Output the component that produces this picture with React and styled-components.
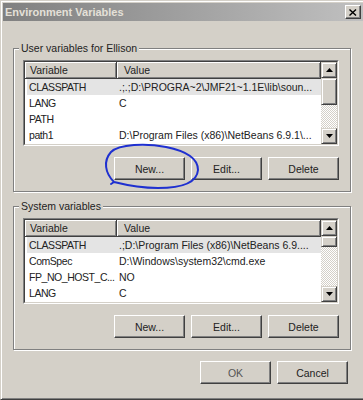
import React from 'react';
import styled, { createGlobalStyle } from 'styled-components';

const GlobalStyle = createGlobalStyle`
  html, body {
    margin: 0;
    padding: 0;
    width: 363px;
    height: 400px;
    overflow: hidden;
    background: #d4d0c8;
  }
  * { box-sizing: border-box; }
`;

const FONT = `"Liberation Sans", Arial, sans-serif`;

const Window = styled.div`
  position: relative;
  width: 366px;
  height: 400px;
  background: #d4d0c8;
  border: 1px solid;
  border-color: #d4d0c8 #404040 #404040 #d4d0c8;
  box-shadow: inset 1px 1px #fff, inset -1px -1px #808080;
  padding: 2px;
  font-family: ${FONT};
  font-size: 10.5px;
  color: #222;
`;

const TitleBar = styled.div`
  height: 18px;
  display: flex;
  align-items: center;
  justify-content: space-between;
  padding: 0 2px 0 2px;
  background: linear-gradient(to right, #808080, #c0c0c0);
`;

const Title = styled.span`
  font-weight: bold;
  font-size: 11px;
  color: #e4e0d8;
`;

const CloseButton = styled.div`
  width: 16px;
  height: 14px;
  display: flex;
  align-items: center;
  justify-content: center;
  background: #d4d0c8;
  border: 1px solid;
  border-color: #fff #404040 #404040 #fff;
  box-shadow: inset -1px -1px #808080;
`;

const Body = styled.div`
  display: flex;
  flex-direction: column;
  padding: 21px 0 0 10px;
`;

const Group = styled.fieldset`
  width: 338px;
  margin: ${p => (p.$first ? '0' : '8px 0 0 0')};
  padding: 5px 11px 11px 9px;
  border: 1px solid #808080;
  box-shadow: inset 1px 1px #fff, 1px 1px #fff;
  min-width: 0;
`;

const Legend = styled.legend`
  margin-left: -4px;
  padding: 0 2px;
  line-height: 13px;
  background: #d4d0c8;
`;

const ListBox = styled.div`
  height: 86px;
  border: 1px solid;
  border-color: #808080 #fff #fff #808080;
`;

const ListInner = styled.div`
  height: 100%;
  border: 1px solid;
  border-color: #404040 #d4d0c8 #d4d0c8 #404040;
  background: #fff;
  display: grid;
  grid-template-columns: 1fr 16px;
  overflow: hidden;
`;

const ListMain = styled.div`
  display: flex;
  flex-direction: column;
  overflow: hidden;
`;

const Header = styled.div`
  display: grid;
  grid-template-columns: 92px 1fr;
  height: 17px;
  flex-shrink: 0;
`;

const HeaderCell = styled.div`
  display: flex;
  align-items: center;
  padding-left: ${p => p.$pad}px;
  background: #d4d0c8;
  border-right: 1px solid #404040;
  border-bottom: 1px solid #404040;
  box-shadow: inset 1px 1px #fff, inset -1px -1px #808080;
`;

const Row = styled.div`
  display: grid;
  grid-template-columns: 90px 1fr;
  height: 16px;
  flex-shrink: 0;
  align-items: center;
  margin-left: 2px;
  background: ${p => (p.$selected ? '#e4e4e4' : 'transparent')};
  white-space: nowrap;
`;

const Cell = styled.span`
  padding-left: 2px;
  overflow: hidden;
  letter-spacing: ${p => (p.$name ? '-0.45px' : '0')};
`;

const ScrollBar = styled.div`
  display: flex;
  flex-direction: column;
  background: repeating-conic-gradient(#d4d0c8 0 25%, #fff 0 50%) 0 0 / 2px 2px;
`;

const ScrollButton = styled.div`
  height: 16px;
  flex-shrink: 0;
  display: flex;
  align-items: center;
  justify-content: center;
  background: #d4d0c8;
  border: 1px solid;
  border-color: #d4d0c8 #404040 #404040 #d4d0c8;
  box-shadow: inset 1px 1px #fff, inset -1px -1px #808080;
`;

const Thumb = styled.div`
  height: ${p => p.$size}px;
  flex-shrink: 0;
  background: #d4d0c8;
  border: 1px solid;
  border-color: #d4d0c8 #404040 #404040 #d4d0c8;
  box-shadow: inset 1px 1px #fff, inset -1px -1px #808080;
`;

const Spacer = styled.div`
  flex: 1;
`;

const ButtonRow = styled.div`
  display: flex;
  justify-content: flex-end;
  gap: 6px;
  margin-top: ${p => p.$top}px;
  padding-right: ${p => p.$right || 0}px;
`;

const Button = styled.div`
  width: 71px;
  height: 23px;
  display: flex;
  align-items: center;
  justify-content: center;
  background: #d4d0c8;
  border: 1px solid;
  border-color: #fff #404040 #404040 #fff;
  box-shadow: inset -1px -1px #808080;
  color: ${p => (p.$dim ? '#555' : '#222')};
`;

const Scribble = styled.svg`
  position: absolute;
  left: 0;
  top: 0;
  pointer-events: none;
`;

const Arrow = ({ down }) => (
  <svg width="7" height="4" viewBox="0 0 7 4">
    <polygon points={down ? '0,0 7,0 3.5,4' : '0,4 7,4 3.5,0'} fill="#000" />
  </svg>
);

const VarList = ({ rows, thumb }) => (
  <ListBox>
    <ListInner>
      <ListMain>
        <Header>
          <HeaderCell $pad={5}>Variable</HeaderCell>
          <HeaderCell $pad={7}>Value</HeaderCell>
        </Header>
        {rows.map((r, i) => (
          <Row key={i} $selected={i === 0}>
            <Cell $name>{r[0]}</Cell>
            <Cell>{r[1]}</Cell>
          </Row>
        ))}
      </ListMain>
      <ScrollBar>
        <ScrollButton><Arrow /></ScrollButton>
        <Thumb $size={thumb} />
        <Spacer />
        <ScrollButton><Arrow down /></ScrollButton>
      </ScrollBar>
    </ListInner>
  </ListBox>
);

const userRows = [
  ['CLASSPATH', '.;.;D:\\PROGRA~2\\JMF21~1.1E\\lib\\soun...'],
  ['LANG', 'C'],
  ['PATH', ''],
  ['path1', 'D:\\Program Files (x86)\\NetBeans 6.9.1\\...'],
];

const systemRows = [
  ['CLASSPATH', '.;D:\\Program Files (x86)\\NetBeans 6.9....'],
  ['ComSpec', 'D:\\Windows\\system32\\cmd.exe'],
  ['FP_NO_HOST_C...', 'NO'],
  ['LANG', 'C'],
];

const App = () => (
  <>
    <GlobalStyle />
    <Window>
      <TitleBar>
        <Title>Environment Variables</Title>
        <CloseButton>
          <svg width="8" height="7" viewBox="0 0 8 7">
            <path d="M0.5 0.5 L7 6.5 M7 0.5 L0.5 6.5" stroke="#000" strokeWidth="1.4" />
          </svg>
        </CloseButton>
      </TitleBar>
      <Body>
        <Group $first>
          <Legend>User variables for Ellison</Legend>
          <VarList rows={userRows} thumb={27} />
          <ButtonRow $top={11}>
            <Button>New...</Button>
            <Button>Edit...</Button>
            <Button>Delete</Button>
          </ButtonRow>
        </Group>
        <Group>
          <Legend>System variables</Legend>
          <VarList rows={systemRows} thumb={11} />
          <ButtonRow $top={11}>
            <Button>New...</Button>
            <Button>Edit...</Button>
            <Button>Delete</Button>
          </ButtonRow>
        </Group>
        <ButtonRow $top={11} $right={15}>
          <Button $dim>OK</Button>
          <Button>Cancel</Button>
        </ButtonRow>
      </Body>
      <Scribble width="363" height="400">
        <path
          d="M113 181 C104 172, 102 160, 110 151 C118 143, 145 142, 165 146 C185 150, 197 158, 197 169 C196 182, 180 187, 157 187 C140 187, 125 184, 113 181 L110 183"
          fill="none"
          stroke="#1f30d0"
          strokeWidth="2"
          strokeLinecap="round"
        />
      </Scribble>
    </Window>
  </>
);

export default App;
